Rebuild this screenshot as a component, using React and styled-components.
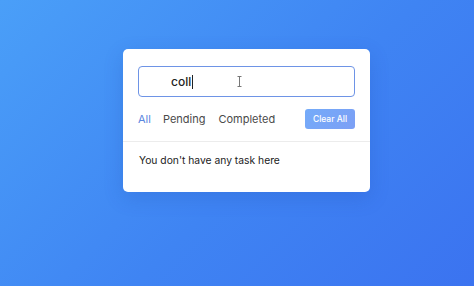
import React from "react";
import styled, { createGlobalStyle } from "styled-components";

const GlobalStyle = createGlobalStyle`
  html, body { margin: 0; padding: 0; }
  body {
    width: 474px;
    height: 286px;
    overflow: hidden;
    font-family: Inter, "Noto Sans", sans-serif;
  }
`;

const Page = styled.div`
  width: 474px;
  height: 286px;
  background: linear-gradient(135deg, #4a9ff8 0%, #3f84f3 55%, #3b73f0 100%);
  padding-top: 49px;
  box-sizing: border-box;
  padding-left: 123px;
`;

const Card = styled.div`
  width: 247px;
  height: 143px;
  background: #fff;
  border-radius: 5px;
  box-shadow: 0 6px 20px rgba(20, 60, 160, 0.18);
  box-sizing: border-box;
`;

const Top = styled.div`
  padding: 17px 15px 0 15px;
`;

const InputWrap = styled.div`
  position: relative;
  height: 31px;
  border: 1.5px solid #6e94e6;
  border-radius: 4px;
  box-sizing: border-box;
  display: flex;
  align-items: center;
  padding-left: 32px;
`;

const Typed = styled.span`
  font-size: 12px;
  font-weight: 500;
  color: #222;
  line-height: 1;
`;

const Caret = styled.span`
  display: inline-block;
  width: 1px;
  height: 14px;
  background: #222;
  margin-left: 0.5px;
`;

const Pointer = styled.svg`
  position: absolute;
  left: 98px;
  top: 9px;
`;

const Controls = styled.div`
  display: flex;
  align-items: center;
  margin-top: 12px;
  height: 20px;
`;

const Filter = styled.span`
  font-size: 11px;
  color: ${(p) => (p.$active ? "#5a86e0" : "#4a4a4a")};
  margin-right: ${(p) => p.$gap}px;
`;

const ClearButton = styled.button`
  margin-left: auto;
  width: 50px;
  height: 20px;
  border: none;
  border-radius: 3px;
  background: linear-gradient(135deg, #74abf9, #7c9ff5);
  color: #fff;
  font-family: inherit;
  font-size: 8.5px;
  font-weight: 500;
  padding: 0;
`;

const Divider = styled.div`
  height: 1px;
  background: #ececec;
  margin-top: 12px;
`;

const Empty = styled.p`
  margin: 0;
  padding: 12px 16px 0;
  font-size: 10.3px;
  color: #222;
`;

export default function App() {
  return (
    <>
      <GlobalStyle />
      <Page>
        <Card>
          <Top>
            <InputWrap>
              <Typed>coll</Typed>
              <Caret />
              <Pointer width="5" height="11" viewBox="0 0 5 11">
                <path d="M0.5 0.5h4M2.5 0.5v10M0.5 10.5h4" stroke="#777" strokeWidth="1" fill="none" />
              </Pointer>
            </InputWrap>
            <Controls>
              <Filter $active $gap={12}>All</Filter>
              <Filter $gap={13}>Pending</Filter>
              <Filter $gap={0}>Completed</Filter>
              <ClearButton>Clear All</ClearButton>
            </Controls>
          </Top>
          <Divider />
          <Empty>You don't have any task here</Empty>
        </Card>
      </Page>
    </>
  );
}
